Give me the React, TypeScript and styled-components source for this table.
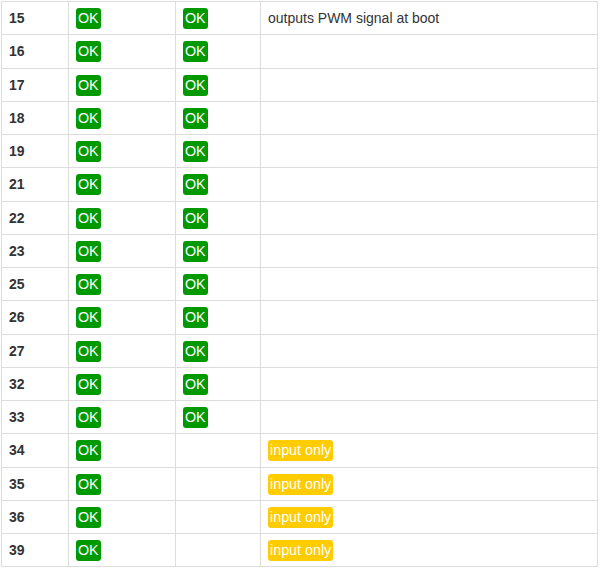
import React from 'react';
import styled, { createGlobalStyle } from 'styled-components';

// Styles
const GlobalStyle = createGlobalStyle`
  html, body {
    margin: 0;
    padding: 0;
    background: #fff;
  }
  body {
    font-family: 'Liberation Sans', Arial, sans-serif;
    font-size: 14px;
    color: #333;
  }
`;

const Table = styled.table`
  border-collapse: collapse;
  table-layout: fixed;
  width: 597px;
  margin: 1px 0 0 1px;
`;

const Row = styled.tr`
  height: 33.25px;
`;

const Cell = styled.td<{ $bold?: boolean }>`
  border: 1px solid #ddd;
  padding: 0 6px 0 7px;
  line-height: 20px;
  vertical-align: middle;
  font-weight: ${(p) => (p.$bold ? 700 : 400)};
  white-space: nowrap;
`;

const Badge = styled.span<{ $tone: 'ok' | 'warn' }>`
  display: inline-block;
  padding: 0 2px;
  line-height: 21px;
  border-radius: 3px;
  color: #fff;
  font-size: 14.3px;
  vertical-align: middle;
  background: ${(p) => (p.$tone === 'ok' ? '#009900' : '#ffcc00')};
`;

// Data
type Pin = { gpio: number; input: boolean; output: boolean; note?: string; inputOnly?: boolean };

const pins: Pin[] = [
  { gpio: 15, input: true, output: true, note: 'outputs PWM signal at boot' },
  { gpio: 16, input: true, output: true },
  { gpio: 17, input: true, output: true },
  { gpio: 18, input: true, output: true },
  { gpio: 19, input: true, output: true },
  { gpio: 21, input: true, output: true },
  { gpio: 22, input: true, output: true },
  { gpio: 23, input: true, output: true },
  { gpio: 25, input: true, output: true },
  { gpio: 26, input: true, output: true },
  { gpio: 27, input: true, output: true },
  { gpio: 32, input: true, output: true },
  { gpio: 33, input: true, output: true },
  { gpio: 34, input: true, output: false, inputOnly: true },
  { gpio: 35, input: true, output: false, inputOnly: true },
  { gpio: 36, input: true, output: false, inputOnly: true },
  { gpio: 39, input: true, output: false, inputOnly: true },
];

// Component
const App = () => {
  return (
    <>
      <GlobalStyle />
      <Table>
        <colgroup>
          <col style={{ width: 67 }} />
          <col style={{ width: 107 }} />
          <col style={{ width: 85 }} />
          <col />
        </colgroup>
        <tbody>
          {pins.map((pin) => (
            <Row key={pin.gpio}>
              <Cell $bold>{pin.gpio}</Cell>
              <Cell>{pin.input && <Badge $tone="ok">OK</Badge>}</Cell>
              <Cell>{pin.output && <Badge $tone="ok">OK</Badge>}</Cell>
              <Cell>
                {pin.inputOnly ? <Badge $tone="warn">input only</Badge> : pin.note}
              </Cell>
            </Row>
          ))}
        </tbody>
      </Table>
    </>
  );
};

export default App;
